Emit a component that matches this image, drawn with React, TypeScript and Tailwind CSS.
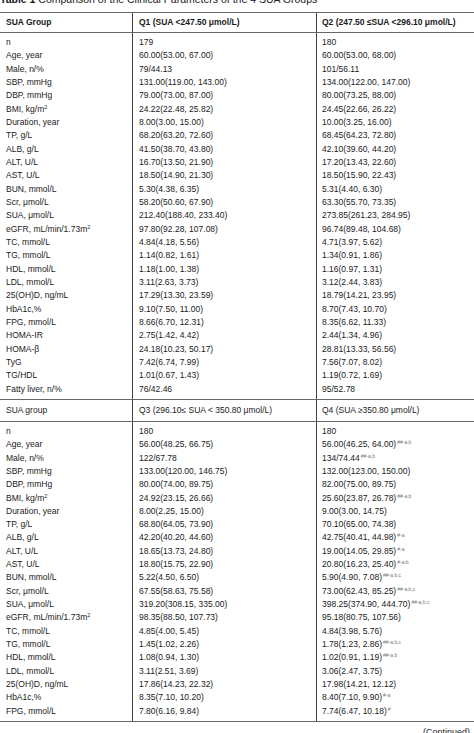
import React from 'react';

type Row = { label: React.ReactNode; a: React.ReactNode; b: React.ReactNode };

const Sup: React.FC<{ t: string }> = ({ t }) => (
  <span className="ml-[1px] text-[5px] leading-none text-[#777] align-[3px]">{t}</span>
);

const Sq = () => <span className="text-[5.5px] leading-none align-[3px]">2</span>;

const top: Row[] = [
  { label: 'n', a: '179', b: '180' },
  { label: 'Age, year', a: '60.00(53.00, 67.00)', b: '60.00(53.00, 68.00)' },
  { label: 'Male, n/%', a: '79/44.13', b: '101/56.11' },
  { label: 'SBP, mmHg', a: '131.00(119.00, 143.00)', b: '134.00(122.00, 147.00)' },
  { label: 'DBP, mmHg', a: '79.00(73.00, 87.00)', b: '80.00(73.25, 88.00)' },
  { label: <>BMI, kg/m<Sq /></>, a: '24.22(22.48, 25.82)', b: '24.45(22.66, 26.22)' },
  { label: 'Duration, year', a: '8.00(3.00, 15.00)', b: '10.00(3.25, 16.00)' },
  { label: 'TP, g/L', a: '68.20(63.20, 72.60)', b: '68.45(64.23, 72.80)' },
  { label: 'ALB, g/L', a: '41.50(38.70, 43.80)', b: '42.10(39.60, 44.20)' },
  { label: 'ALT, U/L', a: '16.70(13.50, 21.90)', b: '17.20(13.43, 22.60)' },
  { label: 'AST, U/L', a: '18.50(14.90, 21.30)', b: '18.50(15.90, 22.43)' },
  { label: 'BUN, mmol/L', a: '5.30(4.38, 6.35)', b: '5.31(4.40, 6.30)' },
  { label: 'Scr, μmol/L', a: '58.20(50.60, 67.90)', b: '63.30(55.70, 73.35)' },
  { label: 'SUA, μmol/L', a: '212.40(188.40, 233.40)', b: '273.85(261.23, 284.95)' },
  { label: <>eGFR, mL/min/1.73m<Sq /></>, a: '97.80(92.28, 107.08)', b: '96.74(89.48, 104.68)' },
  { label: 'TC, mmol/L', a: '4.84(4.18, 5.56)', b: '4.71(3.97, 5.62)' },
  { label: 'TG, mmol/L', a: '1.14(0.82, 1.61)', b: '1.34(0.91, 1.86)' },
  { label: 'HDL, mmol/L', a: '1.18(1.00, 1.38)', b: '1.16(0.97, 1.31)' },
  { label: 'LDL, mmol/L', a: '3.11(2.63, 3.73)', b: '3.12(2.44, 3.83)' },
  { label: '25(OH)D, ng/mL', a: '17.29(13.30, 23.59)', b: '18.79(14.21, 23.95)' },
  { label: 'HbA1c,%', a: '9.10(7.50, 11.00)', b: '8.70(7.43, 10.70)' },
  { label: 'FPG, mmol/L', a: '8.66(6.70, 12.31)', b: '8.35(6.62, 11.33)' },
  { label: 'HOMA-IR', a: '2.75(1.42, 4.42)', b: '2.44(1.34, 4.96)' },
  { label: 'HOMA-β', a: '24.18(10.23, 50.17)', b: '28.81(13.33, 56.56)' },
  { label: 'TyG', a: '7.42(6.74, 7.99)', b: '7.56(7.07, 8.02)' },
  { label: 'TG/HDL', a: '1.01(0.67, 1.43)', b: '1.19(0.72, 1.69)' },
  { label: 'Fatty liver, n/%', a: '76/42.46', b: '95/52.78' },
];

const bottom: Row[] = [
  { label: 'n', a: '180', b: '180' },
  { label: 'Age, year', a: '56.00(48.25, 66.75)', b: <>56.00(46.25, 64.00)<Sup t="##-a,b" /></> },
  { label: 'Male, n/%', a: '122/67.78', b: <>134/74.44<Sup t="##-a,b" /></> },
  { label: 'SBP, mmHg', a: '133.00(120.00, 146.75)', b: '132.00(123.00, 150.00)' },
  { label: 'DBP, mmHg', a: '80.00(74.00, 89.75)', b: '82.00(75.00, 89.75)' },
  { label: <>BMI, kg/m<Sq /></>, a: '24.92(23.15, 26.66)', b: <>25.60(23.87, 26.78)<Sup t="##-a,b" /></> },
  { label: 'Duration, year', a: '8.00(2.25, 15.00)', b: '9.00(3.00, 14.75)' },
  { label: 'TP, g/L', a: '68.80(64.05, 73.90)', b: '70.10(65.00, 74.38)' },
  { label: 'ALB, g/L', a: '42.20(40.20, 44.60)', b: <>42.75(40.41, 44.98)<Sup t="#-a" /></> },
  { label: 'ALT, U/L', a: '18.65(13.73, 24.80)', b: <>19.00(14.05, 29.85)<Sup t="#-a" /></> },
  { label: 'AST, U/L', a: '18.80(15.75, 22.90)', b: <>20.80(16.23, 25.40)<Sup t="#-a,b" /></> },
  { label: 'BUN, mmol/L', a: '5.22(4.50, 6.50)', b: <>5.90(4.90, 7.08)<Sup t="##-a,b,c" /></> },
  { label: 'Scr, μmol/L', a: '67.55(58.63, 75.58)', b: <>73.00(62.43, 85.25)<Sup t="##-a,b,c" /></> },
  { label: 'SUA, μmol/L', a: '319.20(308.15, 335.00)', b: <>398.25(374.90, 444.70)<Sup t="##-a,b,c" /></> },
  { label: <>eGFR, mL/min/1.73m<Sq /></>, a: '98.35(88.50, 107.73)', b: '95.18(80.75, 107.56)' },
  { label: 'TC, mmol/L', a: '4.85(4.00, 5.45)', b: '4.84(3.98, 5.76)' },
  { label: 'TG, mmol/L', a: '1.45(1.02, 2.26)', b: <>1.78(1.23, 2.86)<Sup t="##-a,b,c" /></> },
  { label: 'HDL, mmol/L', a: '1.08(0.94, 1.30)', b: <>1.02(0.91, 1.19)<Sup t="##-a,b" /></> },
  { label: 'LDL, mmol/L', a: '3.11(2.51, 3.69)', b: '3.06(2.47, 3.75)' },
  { label: '25(OH)D, ng/mL', a: '17.86(14.23, 22.32)', b: '17.98(14.21, 12.12)' },
  { label: 'HbA1c,%', a: '8.35(7.10, 10.20)', b: <>8.40(7.10, 9.90)<Sup t="#-a" /></> },
  { label: 'FPG, mmol/L', a: '7.80(6.16, 9.84)', b: <>7.74(6.47, 10.18)<Sup t="#" /></> },
];

const HeadRow: React.FC<{ cells: string[]; bold?: boolean; h: string }> = ({ cells, bold, h }) => (
  <div className={`flex border-b border-[#666] ${h} ${bold ? 'font-bold' : ''}`}>
    <div className="w-[133px] shrink-0 border-r border-[#444] pl-[6px] flex items-center">{cells[0]}</div>
    <div className="w-[184px] shrink-0 border-r border-[#444] pl-[6px] flex items-center">{cells[1]}</div>
    <div className="flex-1 pl-[5px] flex items-center whitespace-nowrap">{cells[2]}</div>
  </div>
);

const Body: React.FC<{ rows: Row[]; pad: string }> = ({ rows, pad }) => (
  <div className="flex border-b border-[#666]">
    <div className={`w-[133px] shrink-0 border-r border-[#444] pl-[6px] ${pad}`}>
      {rows.map((r, i) => <div key={i} className="h-[13.333px] leading-[13.333px] whitespace-nowrap">{r.label}</div>)}
    </div>
    <div className={`w-[184px] shrink-0 border-r border-[#444] pl-[6px] ${pad}`}>
      {rows.map((r, i) => <div key={i} className="h-[13.333px] leading-[13.333px] whitespace-nowrap">{r.a}</div>)}
    </div>
    <div className={`flex-1 pl-[5px] ${pad}`}>
      {rows.map((r, i) => <div key={i} className="h-[13.333px] leading-[13.333px] whitespace-nowrap">{r.b}</div>)}
    </div>
  </div>
);

export default function App() {
  return (
    <div className="w-[474px] h-[733px] overflow-hidden bg-white text-[#1a1a1a] font-['Liberation_Sans',Arial,sans-serif]">
      {/* caption, cut off at the top of the shot */}
      <div className="h-[12px] overflow-hidden">
        <div className="-mt-[6px] text-[10.5px] leading-[11px] whitespace-nowrap">
          <span className="font-bold">Table 1</span> Comparison of the Clinical Parameters of the 4 SUA Groups
        </div>
      </div>

      <div className="border-t border-[#666] text-[8.5px]">
        <HeadRow bold h="h-[20px]" cells={['SUA Group', 'Q1 (SUA <247.50 μmol/L)', 'Q2 (247.50 ≤SUA <296.10 μmol/L)']} />
        <Body rows={top} pad="pt-[3px] pb-[3px]" />
        <HeadRow h="h-[22px]" cells={['SUA group', 'Q3 (296.10≤ SUA < 350.80 μmol/L)', 'Q4 (SUA ≥350.80 μmol/L)']} />
        <Body rows={bottom} pad="pt-[3px] pb-[3px]" />
      </div>

      <div className="flex justify-end pr-[4px] pt-[4px] text-[9px] leading-[12px]">(Continued)</div>
    </div>
  );
}
